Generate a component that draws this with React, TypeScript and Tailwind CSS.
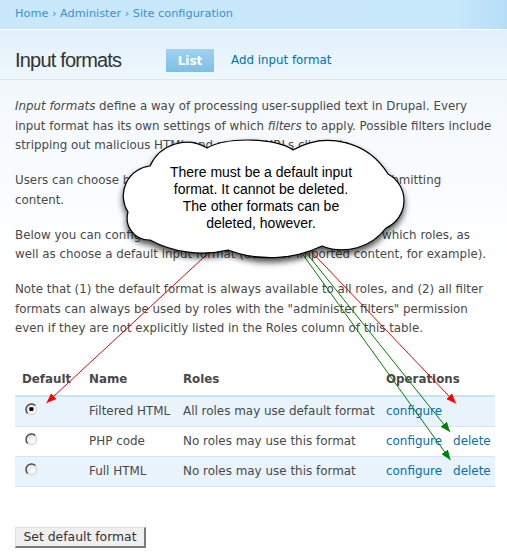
import React from 'react';

type Format = {
  name: string;
  roles: string;
  isDefault: boolean;
  deletable: boolean;
};

const formats: Format[] = [
  { name: 'Filtered HTML', roles: 'All roles may use default format', isDefault: true, deletable: false },
  { name: 'PHP code', roles: 'No roles may use this format', isDefault: false, deletable: true },
  { name: 'Full HTML', roles: 'No roles may use this format', isDefault: false, deletable: true },
];

// old mac-style radio button
const Radio = ({ checked }: { checked: boolean }) => (
  <svg width="13" height="13" viewBox="0 0 13 13">
    <defs>
      <radialGradient id="radioFill" cx="60%" cy="65%" r="60%">
        <stop offset="0%" stopColor="#ffffff" />
        <stop offset="100%" stopColor="#e4e4e4" />
      </radialGradient>
    </defs>
    <circle cx="6.5" cy="6.5" r="5.3" fill="url(#radioFill)" stroke="#d0d0d0" strokeWidth="1" />
    <path d="M 2.6 10.4 A 5.3 5.3 0 0 1 10.4 2.6" fill="none" stroke="#4a4a4a" strokeWidth="1.4" />
    {checked && <rect x="4.3" y="4.3" width="4.2" height="3.6" rx="0.8" fill="#000" />}
  </svg>
);

export default function App() {
  return (
    <div className="relative h-[554px] w-[507px] overflow-hidden bg-white font-['DejaVu_Sans',sans-serif] text-[11.85px] text-[#494949]">
      {/* breadcrumb */}
      <div className="flex h-[30px] items-center border-b border-white bg-linear-to-r from-[#c9e8fb] via-[#c7e7fa] via-90% to-[#b6ddf8] px-[15px] text-[11.3px] text-[#3d8fd3]">
        Home › Administer › Site configuration
      </div>

      {/* page title + tabs */}
      <div className="flex items-center border-b border-[#dce8f0] bg-linear-to-b from-[#e2f0fa] to-[#eef7fc] px-[15px] pt-[19px] pb-[7px]">
        <h1 className="w-[151px] font-['Liberation_Sans',sans-serif] text-[20px] leading-[23px] tracking-[-0.8px] text-[#333]">
          Input formats
        </h1>
        <span className="flex h-[23px] w-[48px] items-center justify-center bg-linear-to-b from-[#9fd2ef] to-[#7dbfe5] text-[12px] font-bold text-white">
          List
        </span>
        <a className="ml-[17px] text-[#0070b8]">Add input format</a>
      </div>

      <div className="bg-linear-to-b from-[#f2f8fd] to-white to-40% px-[15px] pt-[17px]">
        <p className="mb-[15px] leading-[19.7px]">
          <em>Input formats</em> define a way of processing user-supplied text in Drupal. Every
          <br />
          input format has its own settings of which <em>filters</em> to apply. Possible filters include
          <br />
          stripping out malicious HTML and making URLs clickable.
        </p>
        <p className="mb-[15px] leading-[19.7px]">
          Users can choose between the available input formats when submitting
          <br />
          content.
        </p>
        <p className="mb-[15px] leading-[19.7px]">
          Below you can configure which input formats are available to which roles, as
          <br />
          well as choose a default input format (used for imported content, for example).
        </p>
        <p className="leading-[19.7px]">
          Note that (1) the default format is always available to all roles, and (2) all filter
          <br />
          formats can always be used by roles with the "administer filters" permission
          <br />
          even if they are not explicitly listed in the Roles column of this table.
        </p>

        {/* table */}
        <div className="mt-[26px] w-[480px]">
          <div className="grid h-[30px] grid-cols-[67px_94px_203px_1fr] items-center font-bold">
            <span className="pl-[7px]">Default</span>
            <span className="pl-[7px]">Name</span>
            <span className="pl-[7px]">Roles</span>
            <span className="pl-[7px]">Operations</span>
          </div>
          <div className="border-t-2 border-[#c6e2f5]">
            {formats.map((f, i) => (
              <div
                key={f.name}
                className={`grid h-[30px] grid-cols-[67px_94px_203px_1fr] items-center border-b border-[#cfe6f5] text-[11.95px] ${
                  i % 2 === 0 ? 'bg-[#e8f3fb]' : 'bg-white'
                }`}
              >
                <span className="-mt-[4px] flex pl-[10px]">
                  <Radio checked={f.isDefault} />
                </span>
                <span className="pl-[7px]">{f.name}</span>
                <span className="pl-[7px]">{f.roles}</span>
                <span className="flex gap-[11px] pl-[7px] text-[#0070b8]">
                  <a>configure</a>
                  {f.deletable && <a>delete</a>}
                </span>
              </div>
            ))}
          </div>
        </div>

        <button className="mt-[40px] h-[21px] w-[131px] border border-r-2 border-b-2 border-t-[#e0e0e0] border-r-[#7a7a7a] border-b-[#7a7a7a] border-l-[#e0e0e0] bg-[#efefef] text-[12.4px] text-[#333]">
          Set default format
        </button>
      </div>

      {/* annotation arrows */}
      <svg className="pointer-events-none absolute top-0 left-0" width="507" height="554">
        <defs>
          <marker id="redHead" markerWidth="10" markerHeight="8" refX="10" refY="4" orient="auto" markerUnits="userSpaceOnUse">
            <path d="M0,0 L10,4 L0,8 z" fill="#ff0000" />
          </marker>
          <marker id="greenHead" markerWidth="10" markerHeight="8" refX="10" refY="4" orient="auto" markerUnits="userSpaceOnUse">
            <path d="M0,0 L10,4 L0,8 z" fill="#008000" />
          </marker>
        </defs>
        <line x1="217" y1="245" x2="46.5" y2="403" stroke="#ff0000" strokeWidth="1" markerEnd="url(#redHead)" />
        <line x1="305" y1="245" x2="456" y2="403.5" stroke="#ff0000" strokeWidth="1" markerEnd="url(#redHead)" />
        <line x1="296" y1="245" x2="450.5" y2="460" stroke="#008000" strokeWidth="1" markerEnd="url(#greenHead)" />
        <line x1="300" y1="245" x2="450" y2="432" stroke="#008000" strokeWidth="1" markerEnd="url(#greenHead)" />
      </svg>

      {/* cloud callout */}
      <svg className="pointer-events-none absolute top-0 left-0" width="507" height="554">
        <defs>
          <filter id="cloudShadow" x="-20%" y="-20%" width="140%" height="150%">
            <feDropShadow dx="0" dy="4" stdDeviation="3" floodColor="#000" floodOpacity="0.7" />
          </filter>
        </defs>
        <path
          d="M 128 212 A 30 30 0 0 1 150 166 A 40 40 0 0 1 207 148 A 48 16 0 0 1 293 150 A 70 70 0 0 1 388 174 A 30 30 0 0 1 386 228 A 55 55 0 0 1 322 246 A 120 120 0 0 1 228 250 A 110 110 0 0 1 150 240 A 22 22 0 0 1 128 212 Z"
          fill="#fff"
          stroke="#000"
          strokeWidth="1.2"
          filter="url(#cloudShadow)"
        />
      </svg>
      <div className="absolute top-[164px] left-[161px] w-[200px] text-center font-['Liberation_Sans',sans-serif] text-[14px] leading-[17px] text-black">
        There must be a default input
        <br />
        format. It cannot be deleted.
        <br />
        The other formats can be
        <br />
        deleted, however.
      </div>
    </div>
  );
}
